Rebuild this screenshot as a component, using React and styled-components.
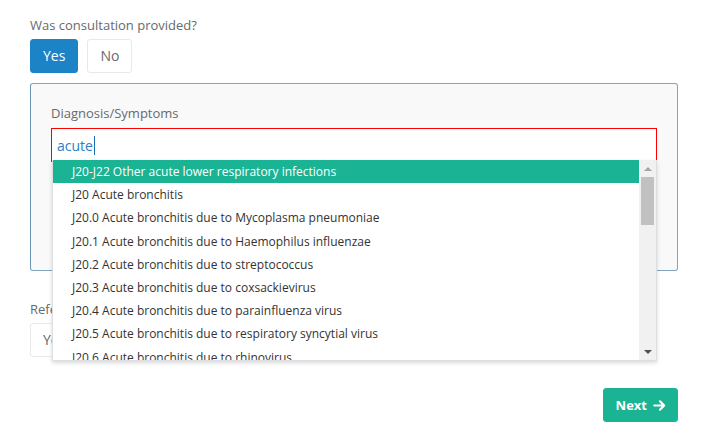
import React from 'react';
import styled, { createGlobalStyle } from 'styled-components';

const GlobalStyle = createGlobalStyle`
  body {
    margin: 0;
    background: #fff;
    font-family: "Open Sans", "Liberation Sans", sans-serif;
    font-size: 13px;
    color: #676a6c;
  }
`;

const Page = styled.div`
  padding: 16px 31px 24px 30px;
`;

const Label = styled.div`
  line-height: 18px;
  margin-bottom: ${(p) => p.mb || 5}px;
`;

const ButtonGroup = styled.div`
  display: flex;
  gap: 9px;
`;

const ChoiceButton = styled.button`
  font-family: inherit;
  font-size: 14px;
  line-height: 20px;
  height: 34px;
  padding: 6px 12px;
  border-radius: 3px;
  cursor: pointer;
  border: 1px solid ${(p) => (p.active ? '#1c84c6' : '#e7eaec')};
  background: ${(p) => (p.active ? '#1c84c6' : '#fff')};
  color: ${(p) => (p.active ? '#fff' : '#676a6c')};
`;

const Panel = styled.div`
  margin-top: 10px;
  background: #f9f9f9;
  border: 1px solid #7fa5c1;
  border-left-color: #6a96b8;
  border-radius: 3px;
  padding: 20px 20px 0 20px;
  height: 188px;
  box-sizing: border-box;
  margin-bottom: 29px;
`;

const Field = styled.div`
  position: relative;
`;

const SearchInput = styled.div`
  height: 34px;
  box-sizing: border-box;
  border: 1px solid #ff0000;
  background: #fff;
  padding: 0 5px;
  display: flex;
  align-items: center;
  font-size: 14px;
  color: #2a80c6;
`;

const Caret = styled.span`
  display: inline-block;
  width: 1px;
  height: 19px;
  background: #1a6fb5;
  margin-left: 1px;
`;

const Menu = styled.div`
  position: absolute;
  top: 32px;
  left: 1px;
  right: 0;
  height: 200px;
  display: flex;
  background: #fff;
  border: 1px solid #dcdee2;
  border-top: none;
  box-shadow: 0 2px 4px rgba(0, 0, 0, 0.15);
  z-index: 5;
  overflow: hidden;
`;

const List = styled.ul`
  flex: 1;
  margin: 0;
  padding: 0;
  list-style: none;
  overflow: hidden;
`;

const Item = styled.li`
  height: 23.2px;
  line-height: 23px;
  padding-left: 19px;
  white-space: nowrap;
  font-size: 12px;
  color: ${(p) => (p.selected ? '#fff' : '#333')};
  background: ${(p) => (p.selected ? '#1ab394' : 'transparent')};
`;

const Scrollbar = styled.div`
  width: 17px;
  background: #f1f1f1;
  display: flex;
  flex-direction: column;
  align-items: center;
`;

const Arrow = styled.div`
  width: 0;
  height: 0;
  border-left: 4px solid transparent;
  border-right: 4px solid transparent;
  ${(p) =>
    p.down
      ? 'border-top: 4px solid #505050; margin-top: auto; margin-bottom: 6px;'
      : 'border-bottom: 4px solid #a3a3a3; margin-top: 7px;'}
`;

const Thumb = styled.div`
  width: 13px;
  height: 48px;
  background: #c1c1c1;
  margin-top: 6px;
`;

const Footer = styled.div`
  display: flex;
  justify-content: flex-end;
  margin-top: 31px;
`;

const NextButton = styled.button`
  display: flex;
  align-items: center;
  gap: 6px;
  height: 34px;
  padding: 0 11px 0 12px;
  border: 1px solid #1ab394;
  background: #1ab394;
  border-radius: 3px;
  color: #fff;
  font-family: inherit;
  font-size: 13px;
  font-weight: 700;
  cursor: pointer;
`;

const options = [
  'J20-J22 Other acute lower respiratory infections',
  'J20 Acute bronchitis',
  'J20.0 Acute bronchitis due to Mycoplasma pneumoniae',
  'J20.1 Acute bronchitis due to Haemophilus influenzae',
  'J20.2 Acute bronchitis due to streptococcus',
  'J20.3 Acute bronchitis due to coxsackievirus',
  'J20.4 Acute bronchitis due to parainfluenza virus',
  'J20.5 Acute bronchitis due to respiratory syncytial virus',
  'J20.6 Acute bronchitis due to rhinovirus',
  'J20.7 Acute bronchitis due to echovirus',
];

const ArrowIcon = () => (
  <svg width="13" height="13" viewBox="0 0 14 14" fill="none">
    <path
      d="M1.5 7h10M7.5 2.5L12 7l-4.5 4.5"
      stroke="#fff"
      strokeWidth="2.4"
      strokeLinecap="round"
      strokeLinejoin="round"
    />
  </svg>
);

const App = () => (
  <Page>
    <GlobalStyle />
    <Label>Was consultation provided?</Label>
    <ButtonGroup>
      <ChoiceButton type="button" active>
        Yes
      </ChoiceButton>
      <ChoiceButton type="button">No</ChoiceButton>
    </ButtonGroup>

    <Panel>
      <Label mb={6}>Diagnosis/Symptoms</Label>
      <Field>
        <SearchInput>
          acute
          <Caret />
        </SearchInput>
        <Menu>
          <List>
            {options.map((o, i) => (
              <Item key={o} selected={i === 0}>
                {o}
              </Item>
            ))}
          </List>
          <Scrollbar>
            <Arrow />
            <Thumb />
            <Arrow down />
          </Scrollbar>
        </Menu>
      </Field>
    </Panel>

    <Label>Referral provided?</Label>
    <ButtonGroup>
      <ChoiceButton type="button">Yes</ChoiceButton>
      <ChoiceButton type="button">No</ChoiceButton>
    </ButtonGroup>

    <Footer>
      <NextButton type="button">
        Next
        <ArrowIcon />
      </NextButton>
    </Footer>
  </Page>
);

export default App;
